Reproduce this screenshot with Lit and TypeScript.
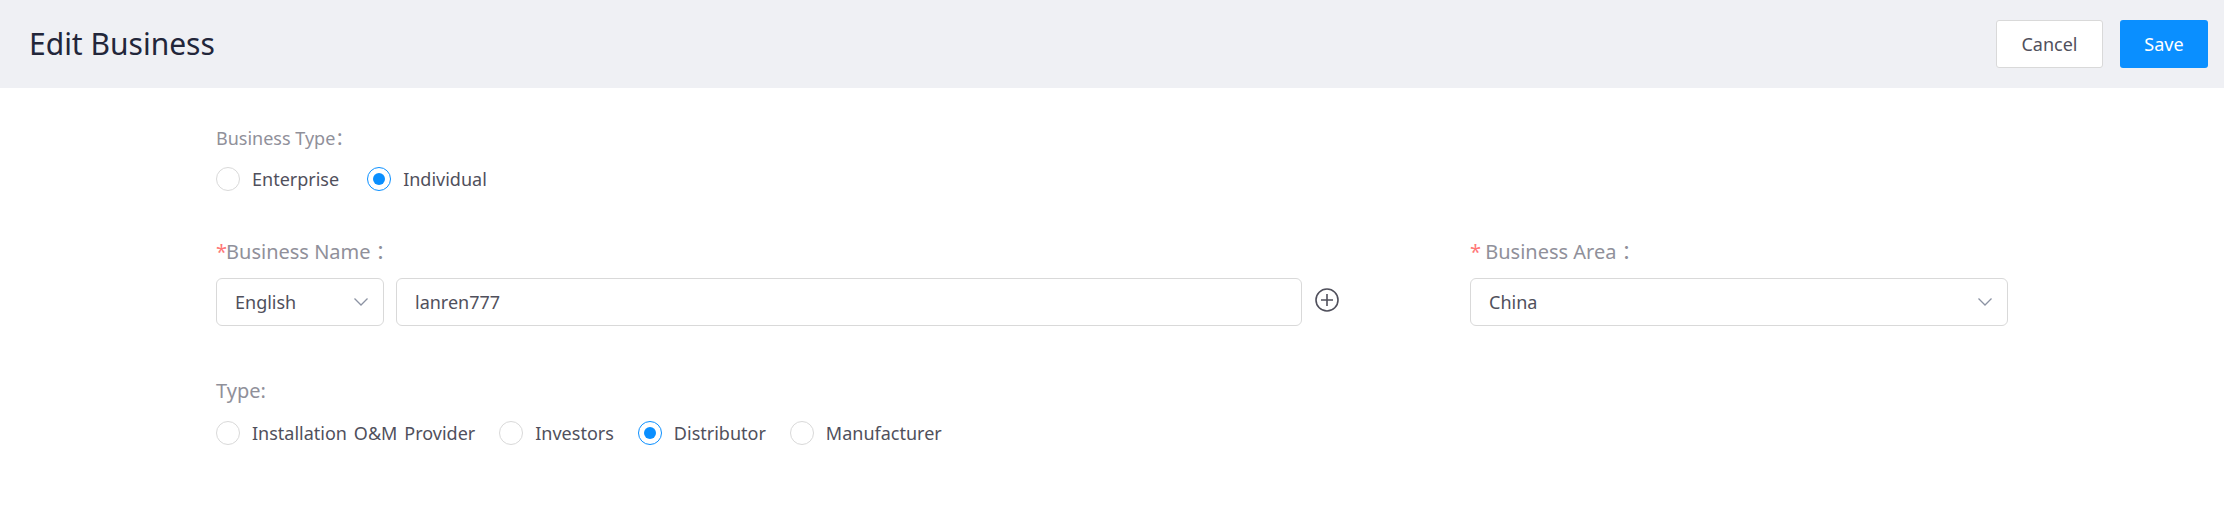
import { LitElement, html, css } from "lit";
import { customElement } from "lit/decorators.js";

const chevron = html`<svg class="chev" width="16" height="10" viewBox="0 0 16 10" fill="none"><path d="M1.5 1.5 L8 8 L14.5 1.5" stroke="#8c93a3" stroke-width="1.3"/></svg>`;

@customElement("app-root")
export class AppRoot extends LitElement {
  static styles = css`
    :host { display: block; width: 2224px; height: 516px; background: #fff; overflow: hidden;
      font-family: "Noto Sans", "Noto Sans CJK SC", sans-serif; color: #50505c; }
    * { box-sizing: border-box; }
    .head { height: 88px; background: #eff0f4; display: flex; align-items: center; padding: 0 16px 0 29px; }
    .title { font-size: 30px; line-height: 40px; color: #22263a; flex: 1; }
    .btn { height: 48px; border-radius: 3px; font-size: 18px; display: flex; align-items: center; justify-content: center; }
    .cancel { width: 107px; background: #fff; border: 1px solid #d9d9d9; color: #50505c; margin-right: 17px; }
    .save { width: 88px; background: #0a8fff; color: #fff; }
    .main { padding: 38px 0 0 216px; }
    .small-label { font-size: 18px; line-height: 24px; color: #90909a; }
    .label { font-size: 20px; line-height: 28px; color: #90909a; }
    .colon { margin-left: 5px; }
    .star { color: #f77; margin-right: -1px; }
    .radios { display: flex; margin-top: 17px; height: 24px; }
    .radios.second { margin-top: 16px; }
    .radio { display: flex; align-items: center; font-size: 18px; line-height: 24px; margin-right: 24px; word-spacing: 2.2px; }
    .radios.roomy .radio { margin-right: 28px; }
    .circle { width: 24px; height: 24px; border-radius: 50%; border: 1px solid #d9d9d9; margin-right: 12px; display: flex; align-items: center; justify-content: center; }
    .circle.on { border-color: #0a8fff; }
    .circle.on::after { content: ""; width: 12px; height: 12px; border-radius: 50%; background: #0a8fff; }
    .row { display: flex; margin-top: 47px; }
    .name { width: 1254px; }
    .area { width: 538px; }
    .controls { display: flex; align-items: center; margin-top: 12px; }
    .box { height: 48px; border: 1px solid #d9d9d9; border-radius: 6px; font-size: 18px; color: #50505c; display: flex; align-items: center; justify-content: space-between; padding: 0 14px 0 18px; }
    .sel { width: 168px; margin-right: 12px; }
    .inp { width: 906px; margin-right: 13px; }
    .wide { width: 100%; }
    .plus { display: block; margin-bottom: 4px; }
    .type { margin-top: 51px; }
  `;

  radio(text: string, on = false) {
    return html`<div class="radio"><span class="circle ${on ? "on" : ""}"></span>${text}</div>`;
  }

  render() {
    return html`
      <div class="head">
        <div class="title">Edit Business</div>
        <div class="btn cancel">Cancel</div>
        <div class="btn save">Save</div>
      </div>
      <div class="main">
        <div class="small-label">Business Type：</div>
        <div class="radios roomy">${this.radio("Enterprise")}${this.radio("Individual", true)}</div>
        <div class="row">
          <div class="name">
            <div class="label"><span class="star">*</span>Business Name<span class="colon">：</span></div>
            <div class="controls">
              <div class="box sel">English${chevron}</div>
              <div class="box inp">lanren777</div>
              <svg class="plus" width="24" height="24" viewBox="0 0 24 24" fill="none" stroke="#50505c" stroke-width="1.6"><circle cx="12" cy="12" r="11"/><path d="M6 12 H18 M12 6 V18"/></svg>
            </div>
          </div>
          <div class="area">
            <div class="label"><span class="star">*</span> Business Area<span class="colon">：</span></div>
            <div class="controls"><div class="box wide">China${chevron}</div></div>
          </div>
        </div>
        <div class="label type">Type:</div>
        <div class="radios second">
          ${this.radio("Installation O&M Provider")}${this.radio("Investors")}${this.radio("Distributor", true)}${this.radio("Manufacturer")}
        </div>
      </div>
    `;
  }
}
